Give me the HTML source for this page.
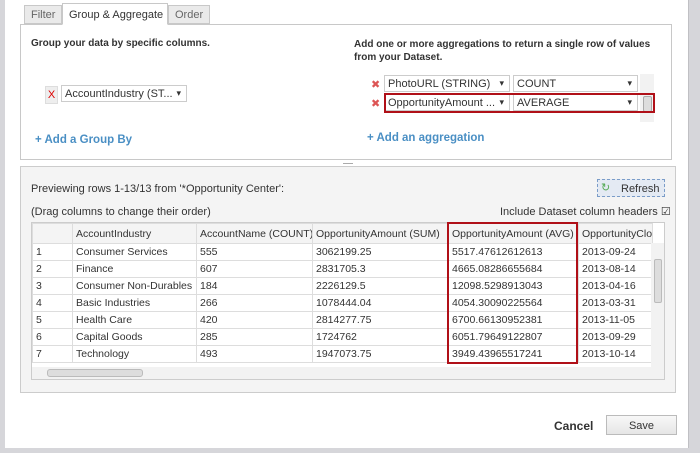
<!DOCTYPE html><html><head><style>
*{box-sizing:border-box;margin:0;padding:0}
body{width:700px;height:453px;background:#fff;font-family:"Liberation Sans",sans-serif;font-size:11px;color:#333;position:relative;overflow:hidden}
.a{position:absolute}
.tab{position:absolute;top:5px;height:19px;border:1px solid #c8c8c8;background:#eaeaea;color:#666;font-size:11px;padding:3px 6px;white-space:nowrap}
.sel{border:1px solid #ccc;background:#fff;height:17px;font-size:11px;padding:2px 3px 0;color:#333;white-space:nowrap;overflow:hidden}
.sel:after{content:"▾";position:absolute;right:5px;top:2px;font-size:9px}
.link{color:#4a8fc4;font-weight:bold;font-size:11.5px}
table{border-collapse:collapse;font-size:10.5px}
td{border:1px solid #ddd;height:17px;line-height:15px;padding:1px 3px 0;white-space:nowrap;overflow:hidden}
tr.h td{height:20px}
</style></head><body>
<div class="a" style="left:0;top:0;width:5px;height:453px;background:#d6d6da"></div>
<div class="a" style="left:688px;top:0;width:12px;height:453px;background:#d6d6da;border-left:1px solid #c0c0c4"></div>
<div class="a" style="left:0;top:448px;width:700px;height:5px;background:#d6d6da"></div>
<div class="a" style="left:20px;top:24px;width:652px;height:136px;border:1px solid #c8c8c8"></div>
<div class="tab" style="left:24px;width:38px">Filter</div>
<div class="tab" style="left:62px;width:106px;background:#fff;border-bottom-color:#fff;color:#333;top:3px;height:22px;padding-top:5px">Group &amp; Aggregate</div>
<div class="tab" style="left:168px;width:42px">Order</div>
<div class="a" style="left:31px;top:38px;font-weight:bold;font-size:10px">Group your data by specific columns.</div>
<div class="a" style="left:45px;top:86px;width:13px;height:18px;background:#eee;border:1px solid #ddd;color:#d00;text-align:center;font-size:11px;padding-top:2px">X</div>
<div class="a sel" style="left:61px;top:85px;width:126px">AccountIndustry (ST...</div>
<div class="a link" style="left:35px;top:134px">+ Add a Group By</div>
<div class="a" style="left:354px;top:38px;font-weight:bold;font-size:10px;line-height:13px;width:310px">Add one or more aggregations to return a single row of values from your Dataset.</div>
<div class="a" style="left:371px;top:78px;color:#d55;font-size:11px">✖</div>
<div class="a" style="left:371px;top:97px;color:#d55;font-size:11px">✖</div>
<div class="a sel" style="left:384px;top:75px;width:126px">PhotoURL (STRING)</div>
<div class="a sel" style="left:513px;top:75px;width:125px">COUNT</div>
<div class="a sel" style="left:384px;top:94px;width:126px">OpportunityAmount ...</div>
<div class="a sel" style="left:513px;top:94px;width:125px">AVERAGE</div>
<div class="a" style="left:640px;top:74px;width:14px;height:48px;background:#f2f2f2"></div>
<div class="a" style="left:643px;top:96px;width:9px;height:16px;background:#ddd;border:1px solid #aaa;border-radius:2px"></div>
<div class="a" style="left:384px;top:93px;width:271px;height:20px;border:2px solid #b01018"></div>
<div class="a link" style="left:367px;top:132px">+ Add an aggregation</div>
<div class="a" style="left:20px;top:166px;width:656px;height:227px;background:#f4f4f4;border:1px solid #ccc"></div>
<div class="a" style="left:343px;top:163px;width:10px;height:1px;background:#aaa"></div>
<div class="a" style="left:31px;top:183px">Previewing rows 1-13/13 from '*Opportunity Center':</div>
<div class="a" style="left:31px;top:206px">(Drag columns to change their order)</div>
<div class="a" style="left:597px;top:179px;width:68px;height:18px;border:1px dashed #7a9cc8;background:#e4eaf3;font-size:11px;padding:3px 0 0 23px">Refresh</div>
<div class="a" style="left:601px;top:181px;color:#5a5;font-size:11px">↻</div>
<div class="a" style="left:500px;top:205px">Include Dataset column headers ☑</div>
<div class="a" style="left:31px;top:222px;width:634px;height:158px;border:1px solid #ccc;background:#fff;overflow:hidden">
<table style="width:620px;table-layout:fixed;background:#fff">
<colgroup><col style="width:40px"><col style="width:124px"><col style="width:116px"><col style="width:136px"><col style="width:130px"><col style="width:74px"></colgroup>
<tr class="h" style="background:#f4f4f4"><td></td><td>AccountIndustry</td><td>AccountName (COUNT)</td><td>OpportunityAmount (SUM)</td><td>OpportunityAmount (AVG)</td><td>OpportunityClose</td></tr>
<tr><td>1</td><td>Consumer Services</td><td>555</td><td>3062199.25</td><td>5517.47612612613</td><td>2013-09-24</td></tr>
<tr><td>2</td><td>Finance</td><td>607</td><td>2831705.3</td><td>4665.08286655684</td><td>2013-08-14</td></tr>
<tr><td>3</td><td>Consumer Non-Durables</td><td>184</td><td>2226129.5</td><td>12098.5298913043</td><td>2013-04-16</td></tr>
<tr><td>4</td><td>Basic Industries</td><td>266</td><td>1078444.04</td><td>4054.30090225564</td><td>2013-03-31</td></tr>
<tr><td>5</td><td>Health Care</td><td>420</td><td>2814277.75</td><td>6700.66130952381</td><td>2013-11-05</td></tr>
<tr><td>6</td><td>Capital Goods</td><td>285</td><td>1724762</td><td>6051.79649122807</td><td>2013-09-29</td></tr>
<tr><td>7</td><td>Technology</td><td>493</td><td>1947073.75</td><td>3949.43965517241</td><td>2013-10-14</td></tr>
</table>
<div class="a" style="left:619px;top:20px;width:14px;height:124px;background:#f2f2f2"></div>
<div class="a" style="left:622px;top:36px;width:8px;height:44px;background:#ddd;border:1px solid #bbb;border-radius:2px"></div>
<div class="a" style="left:0;top:144px;width:633px;height:13px;background:#f2f2f2"></div>
<div class="a" style="left:15px;top:146px;width:96px;height:8px;background:#ddd;border:1px solid #bbb;border-radius:3px"></div>
</div>
<div class="a" style="left:447px;top:222px;width:131px;height:142px;border:2px solid #b01018"></div>
<div class="a" style="left:554px;top:419px;font-weight:bold;font-size:12px">Cancel</div>
<div class="a" style="left:606px;top:415px;width:71px;height:20px;border:1px solid #bbb;background:linear-gradient(#f8f8f8,#e6e6e6);text-align:center;padding-top:4px;font-size:11px">Save</div>
</body></html>
